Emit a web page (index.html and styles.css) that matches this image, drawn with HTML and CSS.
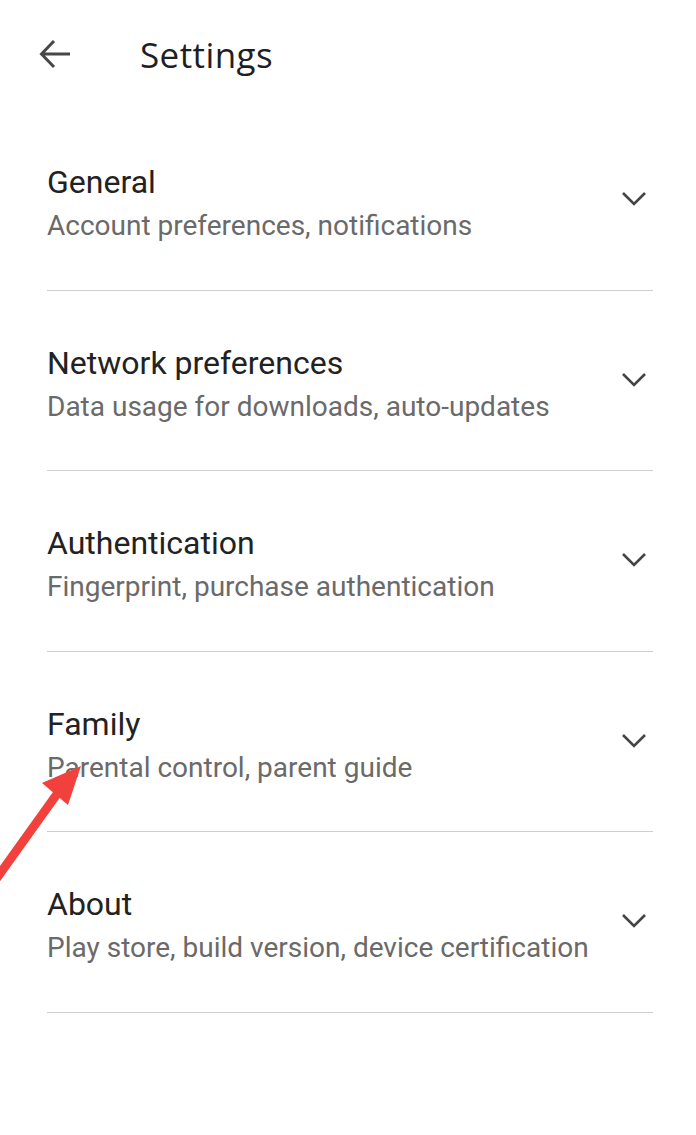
FILE: index.html
```html
<!DOCTYPE html>
<html lang="en">
<head>
  <meta charset="UTF-8">
  <meta name="viewport" content="width=device-width, initial-scale=1.0">
  <title>Settings</title>
  <link rel="stylesheet" href="styles.css">
</head>
<body>
  <div class="screen">
    <header class="topbar">
      <svg class="back" width="34" height="34" viewBox="0 0 34 34">
        <path d="M32 17H5M16 4L3.5 17 16 30" fill="none" stroke="#474747" stroke-width="3"/>
      </svg>
      <h1>Settings</h1>
    </header>

    <div class="list">
      <div class="item">
        <div class="text">
          <div class="title">General</div>
          <div class="sub">Account preferences, notifications</div>
        </div>
        <svg class="chev" width="26" height="16" viewBox="0 0 26 16"><path d="M2 2l11 11L24 2" fill="none" stroke="#444" stroke-width="2.6"/></svg>
      </div>
      <div class="item">
        <div class="text">
          <div class="title">Network preferences</div>
          <div class="sub">Data usage for downloads, auto-updates</div>
        </div>
        <svg class="chev" width="26" height="16" viewBox="0 0 26 16"><path d="M2 2l11 11L24 2" fill="none" stroke="#444" stroke-width="2.6"/></svg>
      </div>
      <div class="item">
        <div class="text">
          <div class="title">Authentication</div>
          <div class="sub">Fingerprint, purchase authentication</div>
        </div>
        <svg class="chev" width="26" height="16" viewBox="0 0 26 16"><path d="M2 2l11 11L24 2" fill="none" stroke="#444" stroke-width="2.6"/></svg>
      </div>
      <div class="item">
        <div class="text">
          <div class="title">Family</div>
          <div class="sub">Parental control, parent guide</div>
        </div>
        <svg class="chev" width="26" height="16" viewBox="0 0 26 16"><path d="M2 2l11 11L24 2" fill="none" stroke="#444" stroke-width="2.6"/></svg>
      </div>
      <div class="item">
        <div class="text">
          <div class="title">About</div>
          <div class="sub">Play store, build version, device certification</div>
        </div>
        <svg class="chev" width="26" height="16" viewBox="0 0 26 16"><path d="M2 2l11 11L24 2" fill="none" stroke="#444" stroke-width="2.6"/></svg>
      </div>
    </div>

    <!-- annotation arrow pointing at "Parental control" -->
    <svg class="pointer" width="90" height="125" viewBox="0 0 90 125">
      <path d="M-6 124L57 36" stroke="#f2403d" stroke-width="9"/>
      <path d="M81 8L42 25 68 47Z" fill="#f2403d"/>
    </svg>
  </div>
</body>
</html>
```

FILE: styles.css
```css
body {
  margin: 0;
  background: #fff;
  font-family: Roboto, "Liberation Sans", sans-serif;
  color: #1f1f1f;
}
.screen {
  position: relative;
  width: 696px;
  height: 1135px;
  overflow: hidden;
}
.topbar {
  height: 110px;
  display: flex;
  align-items: center;
  padding-left: 38px;
  padding-bottom: 2px;
  box-sizing: border-box;
}
.topbar h1 {
  margin: 0 0 0 68px;
  font-family: "Open Sans", Roboto, sans-serif;
  font-weight: 500;
  font-size: 35px;
  letter-spacing: 0.4px;
  color: #1f1f1f;
}
.list {
  padding: 0 43px 0 47px;
}
.item {
  height: 180.5px;
  box-sizing: border-box;
  border-bottom: 1.5px solid #cfcfcf;
  display: flex;
  align-items: flex-start;
  padding-top: 52px;
}
.text {
  flex: 1;
}
.title {
  font-size: 32px;
  line-height: 40px;
  color: #222;
}
.sub {
  font-size: 28px;
  line-height: 40px;
  color: #6a6a6a;
  margin-top: 4px;
}
.chev {
  margin-right: 6px;
  margin-top: 29px;
}
.pointer {
  position: absolute;
  left: 0;
  top: 758px;
}
```
